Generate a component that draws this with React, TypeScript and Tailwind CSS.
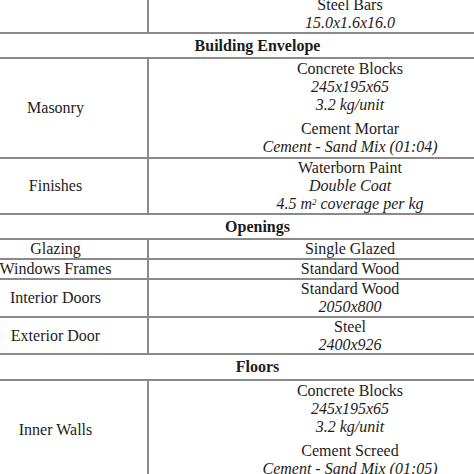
import React from "react";

type Line = { text: React.ReactNode; italic?: boolean };
type Group = Line[];

type Row =
  | { kind: "header"; title: string; h: string }
  | { kind: "data"; label: string; groups: Group[]; h: string };

const concrete: Group[] = [
  [
    { text: "Concrete Blocks" },
    { text: "245x195x65", italic: true },
    { text: "3.2 kg/unit", italic: true },
  ],
];

const rows: Row[] = [
  { kind: "header", title: "Building Envelope", h: "h-[23px]" },
  {
    kind: "data",
    label: "Masonry",
    h: "h-[98px]",
    groups: [
      ...concrete,
      [
        { text: "Cement Mortar" },
        { text: "Cement - Sand Mix (01:04)", italic: true },
      ],
    ],
  },
  {
    kind: "data",
    label: "Finishes",
    h: "h-[54px]",
    groups: [
      [
        { text: "Waterborn Paint" },
        { text: "Double Coat", italic: true },
        {
          text: (
            <>
              4.5 m<sup className="text-[9px]">2</sup> coverage per kg
            </>
          ),
          italic: true,
        },
      ],
    ],
  },
  { kind: "header", title: "Openings", h: "h-[23px]" },
  {
    kind: "data",
    label: "Glazing",
    h: "h-[18px]",
    groups: [[{ text: "Single Glazed" }]],
  },
  {
    kind: "data",
    label: "Windows Frames",
    h: "h-[18px]",
    groups: [[{ text: "Standard Wood" }]],
  },
  {
    kind: "data",
    label: "Interior Doors",
    h: "h-[36px]",
    groups: [[{ text: "Standard Wood" }, { text: "2050x800", italic: true }]],
  },
  {
    kind: "data",
    label: "Exterior Door",
    h: "h-[35px]",
    groups: [[{ text: "Steel" }, { text: "2400x926", italic: true }]],
  },
  { kind: "header", title: "Floors", h: "h-[24px]" },
  {
    kind: "data",
    label: "Inner Walls",
    h: "h-[98px]",
    groups: [
      ...concrete,
      [
        { text: "Cement Screed" },
        { text: "Cement - Sand Mix (01:05)", italic: true },
      ],
    ],
  },
];

const Cell = ({ groups }: { groups: Group[] }) => (
  <div className="flex flex-1 flex-col items-center justify-center gap-[6px]">
    {groups.map((g, gi) => (
      <div key={gi} className="flex flex-col items-center">
        {g.map((l, li) => (
          <div
            key={li}
            className={`h-[18px] whitespace-nowrap leading-[18px] ${l.italic ? "italic" : ""}`}
          >
            {l.text}
          </div>
        ))}
      </div>
    ))}
  </div>
);

export default function App() {
  return (
    <div className="h-[474px] w-[474px] overflow-hidden bg-white font-['Liberation_Serif',serif] text-[16px] text-[#1c1c1c]">
      <div className="ml-[-36px] mt-[-4px] w-[587px]">
        {/* Cropped top row */}
        <div className="flex h-[38px] border-b-2 border-[#8a8a8a]">
          <div className="w-[185px] border-r-2 border-[#8a8a8a]" />
          <Cell
            groups={[
              [{ text: "Steel Bars" }, { text: "15.0x1.6x16.0", italic: true }],
            ]}
          />
        </div>

        {rows.map((r, i) =>
          r.kind === "header" ? (
            <div
              key={i}
              className={`box-content flex items-center justify-center border-b-2 border-[#8a8a8a] font-bold ${r.h}`}
            >
              {r.title}
            </div>
          ) : (
            <div
              key={i}
              className={`box-content flex border-b-2 border-[#8a8a8a] ${r.h}`}
            >
              <div className="flex w-[185px] items-center justify-center whitespace-nowrap border-r-2 border-[#8a8a8a]">
                {r.label}
              </div>
              <Cell groups={r.groups} />
            </div>
          ),
        )}
      </div>
    </div>
  );
}
